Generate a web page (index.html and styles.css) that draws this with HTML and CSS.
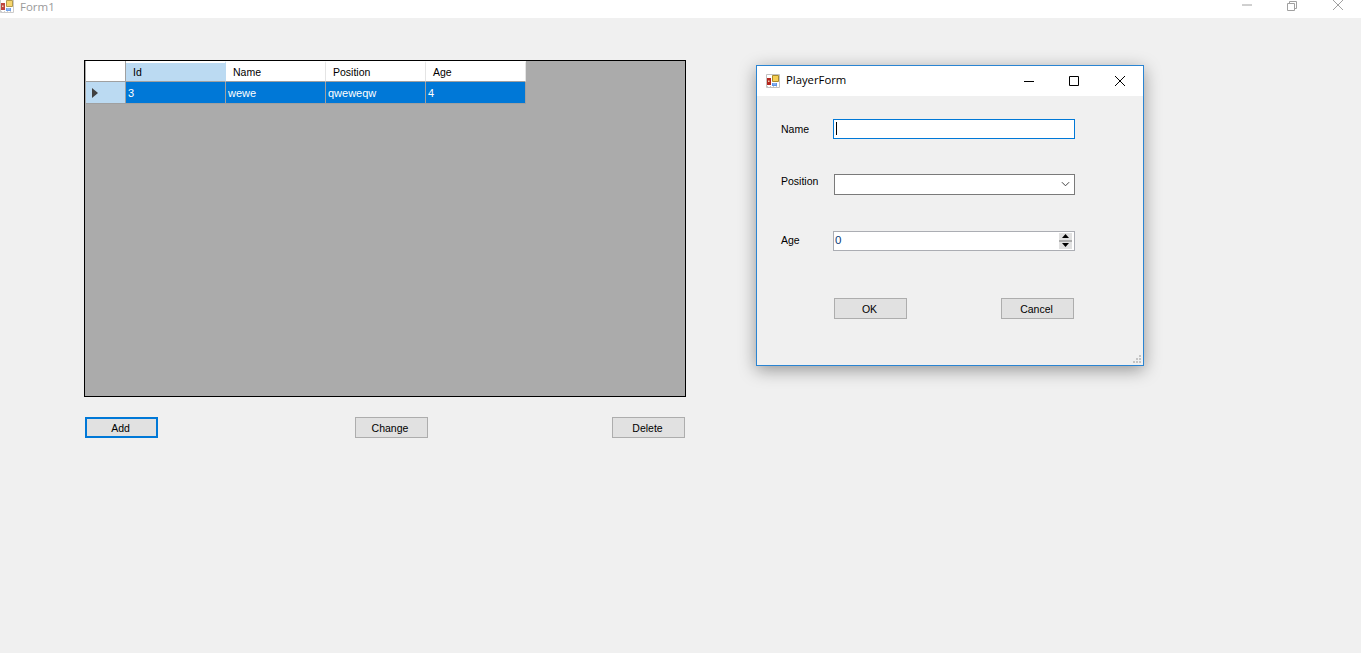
FILE: index.html
```html
<!DOCTYPE html>
<html lang="en">
<head>
<meta charset="utf-8">
<title>Form1</title>
<link rel="stylesheet" href="styles.css">
</head>
<body>
<svg class="defs" width="0" height="0" aria-hidden="true">
  <symbol id="app" viewBox="0 0 14 14">
    <path d="M.5 .5h13v13H.5z" fill="#fff" stroke="#c2c2c2"/>
    <path d="M1 12h1v1H1zM4 12h1v1H4zM7 12h1v1H7zM10 12h1v1h-1z" fill="#c8c8c8"/>
    <path d="M1 4h4v7H1z" fill="#b5261e"/>
    <path d="M2 6.500h1.500V8H2z" fill="#f1d2b0"/>
    <path d="M6.500 1.500h6v6h-6z" fill="#f6cf55" stroke="#a88a2c"/>
    <path d="M6 9h5v3H6z" fill="#5e94e6"/>
    <path d="M7 9.500h3v1H7z" fill="#a9c8f4"/>
  </symbol>
</svg>

<header class="mainbar">
  <svg class="appicon faded"><use href="#app"/></svg>
  <span class="maintitle">Form1</span>
  <div class="maincontrols">
    <svg class="wc" viewBox="0 0 46 18"><path d="M19 5h10" stroke="#a0a0a0" fill="none"/></svg>
    <svg class="wc" viewBox="0 0 46 18"><path d="M18.500 3.500h7v7h-7zM20.500 3.500v-2h7v7h-2" stroke="#a0a0a0" fill="none"/></svg>
    <svg class="wc" viewBox="0 0 46 18"><path d="M18 0l10 10M28 0L18 10" stroke="#a0a0a0" fill="none"/></svg>
  </div>
</header>

<main class="mainform">
  <section class="grid">
    <div class="row headrow">
      <div class="rowhead blank"></div>
      <div class="cell hcell current">Id</div>
      <div class="cell hcell">Name</div>
      <div class="cell hcell">Position</div>
      <div class="cell hcell">Age</div>
    </div>
    <div class="row datarow">
      <div class="rowhead selected"><span class="arrow"></span></div>
      <div class="cell dcell">3</div>
      <div class="cell dcell">wewe</div>
      <div class="cell dcell">qweweqw</div>
      <div class="cell dcell">4</div>
    </div>
  </section>
  <div class="actions">
    <button class="btn focused">Add</button>
    <button class="btn change">Change</button>
    <button class="btn">Delete</button>
  </div>
</main>

<section class="dialog">
  <header class="dlgbar">
    <svg class="appicon dlgicon"><use href="#app"/></svg>
    <span class="dlgtitle">PlayerForm</span>
    <div class="dlgcontrols">
      <svg class="dc" viewBox="0 0 46 30"><path d="M19 15.500h10" stroke="#000" fill="none"/></svg>
      <svg class="dc" viewBox="0 0 46 30"><path d="M18.500 10.500h9v9h-9z" stroke="#000" fill="none"/></svg>
      <svg class="dc" viewBox="0 0 46 30"><path d="M18 10l10 10M28 10L18 20" stroke="#000" fill="none"/></svg>
    </div>
  </header>
  <div class="dlgbody">
    <div class="field namefield">
      <label class="lbl">Name</label>
      <div class="input nameinput"><span class="caret"></span></div>
    </div>
    <div class="field posfield">
      <label class="lbl poslbl">Position</label>
      <div class="input combo">
        <svg class="chev" viewBox="0 0 10 6"><path d="M1 1l4 4 4-4" stroke="#404040" stroke-width="1.100" fill="none"/></svg>
      </div>
    </div>
    <div class="field agefield">
      <label class="lbl agelbl">Age</label>
      <div class="input age">
        <span class="agevalue">0</span>
        <div class="spin">
          <span class="spinbtn"><svg viewBox="0 0 7 4" class="spinglyph"><path d="M3.500 0L7 4H0z" fill="#000"/></svg></span>
          <span class="spinbtn"><svg viewBox="0 0 7 4" class="spinglyph"><path d="M0 0h7L3.500 4z" fill="#000"/></svg></span>
        </div>
      </div>
    </div>
    <div class="dlgactions">
      <button class="btn">OK</button>
      <button class="btn">Cancel</button>
    </div>
  </div>
  <svg class="grip" viewBox="0 0 8 8"><path d="M6 0h2v2H6zM3 3h2v2H3zM6 3h2v2H6zM0 6h2v2H0zM3 6h2v2H3zM6 6h2v2H6z" fill="#c4c4c4"/></svg>
</section>
</body>
</html>
```

FILE: styles.css
```css
* { box-sizing: border-box; }
html, body { margin: 0; height: 100%; }
body {
  background: #f0f0f0;
  font-family: "Liberation Sans", Arial, sans-serif;
  font-size: 10.500px;
  color: #000;
  overflow: hidden;
  position: relative;
}
.defs { position: absolute; }

.mainbar {
  height: 18px;
  background: #fff;
  display: flex;
  align-items: flex-start;
}
.appicon { width: 14px; height: 14px; display: block; flex: none; }
.faded { opacity: .85; margin-top: -1px; }
.maintitle {
  margin-left: 6px;
  font-family: "Open Sans", sans-serif;
  font-size: 11.500px;
  line-height: 14px;
  color: #9a9a9a;
}
.maincontrols { margin-left: auto; display: flex; }
.wc { width: 46px; height: 18px; display: block; }

.mainform {
  width: 602px;
  margin: 42px 0 0 84px;
}
.grid {
  height: 337px;
  background: #ababab;
  border: 1px solid #000;
  padding-left: 1px;
}
.row { display: flex; }
.headrow { height: 21px; }
.datarow { height: 22px; }
.rowhead {
  width: 40px;
  flex: none;
  background: #fff;
  border-right: 1px solid #a0a0a0;
}
.headrow .rowhead { border-bottom: 1px solid #a0a0a0; }
.rowhead.selected {
  background: #bbdaf2;
  border-bottom: 1px solid #a0a0a0;
  display: flex;
  align-items: center;
  padding-left: 6px;
}
.arrow {
  width: 0;
  height: 0;
  border-left: 6px solid #404040;
  border-top: 5px solid transparent;
  border-bottom: 5px solid transparent;
}
.cell { width: 100px; flex: none; display: flex; align-items: center; }
.hcell {
  background: #fff;
  border-top: 2px solid #fff;
  border-right: 1px solid #e4e4e4;
  border-bottom: 1px solid #a0a0a0;
  padding-left: 7px;
}
.hcell.current { background: #bbdaf2; border-right-color: #bbdaf2; }
.dcell {
  background: #0078d7;
  color: #fff;
  border-right: 1px solid #a0a0a0;
  border-bottom: 1px solid #a0a0a0;
  padding-left: 2px;
  font-size: 11px;
}

.actions {
  display: flex;
  justify-content: space-between;
  margin-top: 20px;
  padding: 0 1px 0 1px;
}
.actions .change { margin-left: 12px; }
.btn {
  width: 73px;
  height: 21px;
  background: #e1e1e1;
  border: 1px solid #adadad;
  font: inherit;
  color: #000;
  padding: 0 2px 0 0;
  border-radius: 0;
}
.btn.focused { border: 2px solid #0078d7; }

.dialog {
  position: absolute;
  left: 756px;
  top: 65px;
  width: 388px;
  height: 301px;
  background: #f0f0f0;
  border: 1px solid #2a84d2;
  box-shadow: 0 4px 16px rgba(0, 0, 0, .38);
}
.dlgbar {
  height: 30px;
  background: #fff;
  display: flex;
  align-items: center;
  padding-left: 9px;
}
.dlgtitle {
  margin-left: 6px;
  font-family: "Open Sans", sans-serif;
  font-size: 11.300px;
  line-height: 28px;
  height: 30px;
  color: #000;
}
.dlgcontrols { margin-left: auto; display: flex; }
.dc { width: 46px; height: 30px; display: block; }

.dlgbody { padding: 22px 0 0 24px; }
.field { display: flex; align-items: center; height: 21px; }
.lbl { width: 52px; flex: none; }
.posfield { margin-top: 35px; }
.agefield { margin-top: 35px; }
.poslbl { position: relative; top: -4px; }
.agelbl { position: relative; top: -1px; }
.input { background: #fff; height: 20px; width: 242px; }
.nameinput {
  border: 1px solid #0078d7;
  display: flex;
  align-items: center;
  padding-left: 2px;
}
.caret { width: 1px; height: 13px; background: #000; }
.combo {
  height: 21px;
  width: 241px;
  margin-left: 1px;
  border: 1px solid #7a7a7a;
  display: flex;
  align-items: center;
  justify-content: flex-end;
  padding: 0 4px 0 0;
}
.chev { width: 9px; height: 6px; display: block; margin-top: -1px; }
.age {
  border: 1px solid #abadb3;
  display: flex;
  align-items: center;
  justify-content: space-between;
  padding: 0 0 0 1px;
}
.agevalue { color: #0a3c78; font-size: 11.500px; line-height: 18px; height: 18px; margin-top: -1px; }
.spin {
  width: 13px;
  height: 16px;
  display: flex;
  flex-direction: column;
  gap: 2px;
  margin-right: 2px;
  background: #adadad;
}
.spinbtn {
  flex: 1;
  background: #e1e1e1;
  display: flex;
  align-items: center;
  justify-content: center;
}
.spinglyph { width: 7px; height: 4px; display: block; }

.dlgactions {
  display: flex;
  justify-content: space-between;
  width: 240px;
  margin: 47px 0 0 53px;
}
.grip {
  position: absolute;
  right: 2px;
  bottom: 2px;
  width: 8px;
  height: 8px;
}
```
